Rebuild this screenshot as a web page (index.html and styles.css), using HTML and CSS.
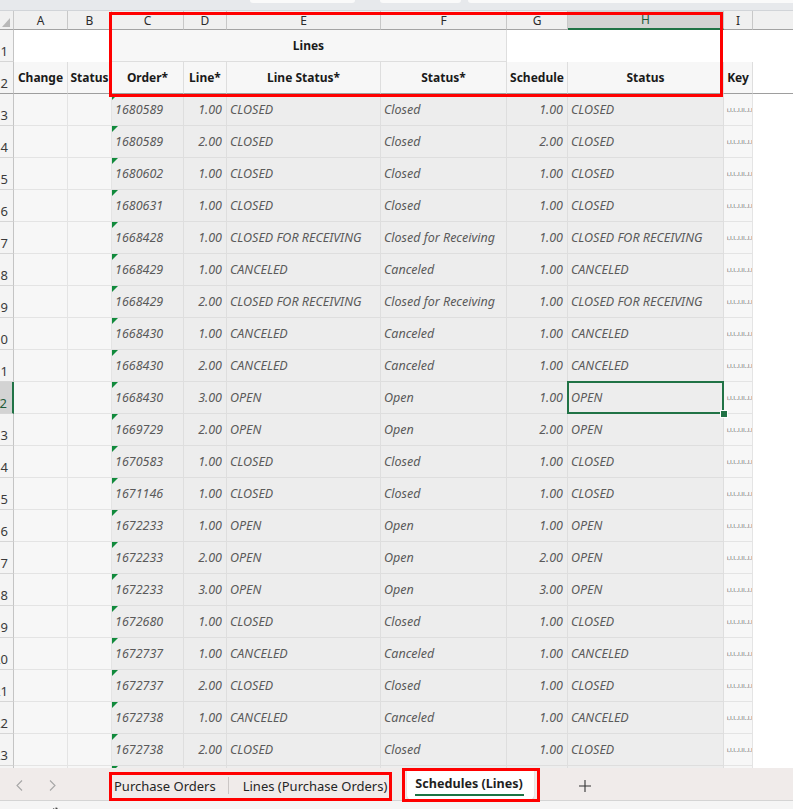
FILE: index.html
```html
<!DOCTYPE html>
<html lang="en">
<head>
    <meta charset="UTF-8">
    <meta name="viewport" content="width=device-width, initial-scale=1.0">
    <title>Schedules (Lines)</title>
    <link rel="stylesheet" href="styles.css">
</head>
<body>
    <div class="ribbon-edge">
        <span class="ribbon-tab tab-a"></span>
        <span class="ribbon-tab tab-b"></span>
        <span class="ribbon-tab tab-c"></span>
    </div>

    <div class="sheet" id="sheet">
        <!-- column letters -->
        <div class="colhead corner"><span class="corner-tri"></span></div>
        <div class="colhead">A</div>
        <div class="colhead">B</div>
        <div class="colhead">C</div>
        <div class="colhead">D</div>
        <div class="colhead">E</div>
        <div class="colhead">F</div>
        <div class="colhead">G</div>
        <div class="colhead sel">H</div>
        <div class="colhead">I</div>
        <div class="colhead last"></div>

        <!-- row 1 -->
        <div class="rh">1</div>
        <div class="c blank"></div>
        <div class="c blank"></div>
        <div class="c group">Lines</div>
        <div class="c blank"></div>
        <div class="c blank"></div>
        <div class="c blank"></div>
        <div class="c blank"></div>

        <!-- row 2 -->
        <div class="rh hd-row">2</div>
        <div class="c hd">Change</div>
        <div class="c hd">Status</div>
        <div class="c hd">Order*</div>
        <div class="c hd">Line*</div>
        <div class="c hd">Line Status*</div>
        <div class="c hd">Status*</div>
        <div class="c hd">Schedule</div>
        <div class="c hd">Status</div>
        <div class="c hd">Key</div>
        <div class="c blank hd-row"></div>
    </div>

    <div class="tabbar">
        <div class="tabnav">
            <svg width="7" height="11" viewBox="0 0 7 11"><path d="M6 0.5 L1 5.5 L6 10.5" fill="none" stroke="#a6a6a6" stroke-width="1.1"/></svg>
            <svg width="7" height="11" viewBox="0 0 7 11"><path d="M1 0.5 L6 5.5 L1 10.5" fill="none" stroke="#a6a6a6" stroke-width="1.1"/></svg>
        </div>
        <div class="tab first">Purchase Orders</div>
        <div class="tab-sep"></div>
        <div class="tab second">Lines (Purchase Orders)</div>
        <div class="tab active"><span>Schedules (Lines)</span></div>
        <div class="tab-add">
            <svg width="12" height="12" viewBox="0 0 12 12"><path d="M6 0 V12 M0 6 H12" stroke="#333" stroke-width="1.1"/></svg>
        </div>
    </div>

    <div class="statusbar">
        <svg class="gear" width="12" height="12" viewBox="0 0 12 12"><circle cx="6" cy="6" r="3.6" fill="none" stroke="#444" stroke-width="1.6" stroke-dasharray="2 1.2"/><circle cx="6" cy="6" r="1.6" fill="none" stroke="#444"/></svg>
    </div>

    <!-- review marks -->
    <div class="mark mark-head"></div>
    <div class="mark mark-tabs"></div>
    <div class="mark mark-active"></div>

    <script>
        const rows = [
            ['1680589', '1.00', 'CLOSED', 'Closed', '1.00', 'CLOSED'],
            ['1680589', '2.00', 'CLOSED', 'Closed', '2.00', 'CLOSED'],
            ['1680602', '1.00', 'CLOSED', 'Closed', '1.00', 'CLOSED'],
            ['1680631', '1.00', 'CLOSED', 'Closed', '1.00', 'CLOSED'],
            ['1668428', '1.00', 'CLOSED FOR RECEIVING', 'Closed for Receiving', '1.00', 'CLOSED FOR RECEIVING'],
            ['1668429', '1.00', 'CANCELED', 'Canceled', '1.00', 'CANCELED'],
            ['1668429', '2.00', 'CLOSED FOR RECEIVING', 'Closed for Receiving', '1.00', 'CLOSED FOR RECEIVING'],
            ['1668430', '1.00', 'CANCELED', 'Canceled', '1.00', 'CANCELED'],
            ['1668430', '2.00', 'CANCELED', 'Canceled', '1.00', 'CANCELED'],
            ['1668430', '3.00', 'OPEN', 'Open', '1.00', 'OPEN'],
            ['1669729', '2.00', 'OPEN', 'Open', '2.00', 'OPEN'],
            ['1670583', '1.00', 'CLOSED', 'Closed', '1.00', 'CLOSED'],
            ['1671146', '1.00', 'CLOSED', 'Closed', '1.00', 'CLOSED'],
            ['1672233', '1.00', 'OPEN', 'Open', '1.00', 'OPEN'],
            ['1672233', '2.00', 'OPEN', 'Open', '2.00', 'OPEN'],
            ['1672233', '3.00', 'OPEN', 'Open', '3.00', 'OPEN'],
            ['1672680', '1.00', 'CLOSED', 'Closed', '1.00', 'CLOSED'],
            ['1672737', '1.00', 'CANCELED', 'Canceled', '1.00', 'CANCELED'],
            ['1672737', '2.00', 'CLOSED', 'Closed', '1.00', 'CLOSED'],
            ['1672738', '1.00', 'CANCELED', 'Canceled', '1.00', 'CANCELED'],
            ['1672738', '2.00', 'CLOSED', 'Closed', '1.00', 'CLOSED'],
            ['1672739', '1.00', 'CLOSED', 'Closed', '1.00', 'CLOSED']
        ];

        const sheet = document.getElementById('sheet');
        const selectedRow = 12;

        function cell(cls, text) {
            const div = document.createElement('div');
            div.className = 'c ' + cls;
            if (text) div.textContent = text;
            sheet.appendChild(div);
            return div;
        }

        rows.forEach((r, i) => {
            const n = i + 3;
            const rh = document.createElement('div');
            rh.className = 'rh' + (n === selectedRow ? ' sel' : '');
            rh.textContent = n;
            sheet.appendChild(rh);

            cell('light');
            cell('light');
            cell('d order', r[0]);
            cell('d num', r[1]);
            cell('d', r[2]);
            cell('d', r[3]);
            cell('d num', r[4]);
            const h = cell('d' + (n === selectedRow ? ' sel' : ''), r[5]);
            if (n === selectedRow) {
                const handle = document.createElement('span');
                handle.className = 'handle';
                h.appendChild(handle);
            }
            const key = cell('light key');
            key.innerHTML = '<span>i,l.l..l.ll..l.l.l</span>';
            cell('blank');
        });
    </script>
</body>
</html>
```

FILE: styles.css
```css
* {
    margin: 0;
    padding: 0;
    box-sizing: border-box;
}

body {
    width: 793px;
    height: 809px;
    overflow: hidden;
    position: relative;
    background: #fff;
    font-family: 'Noto Sans', 'Open Sans', sans-serif;
    color: #1a1a1a;
}

/* strip left over from the ribbon */
.ribbon-edge {
    height: 11px;
    background: #e7e9ec;
    border-bottom: 1px solid #d1d4d8;
    display: flex;
    align-items: flex-start;
    padding-left: 250px;
}

.ribbon-tab {
    height: 3px;
    background: #fafafa;
    border-radius: 0 0 4px 4px;
}

.tab-a { width: 105px; }
.tab-b { width: 81px; margin-left: 25px; }
.tab-c { flex: 1; margin-left: 7px; border-radius: 0 0 0 4px; }

/* grid */
.sheet {
    display: grid;
    grid-template-columns: 14px 54px 44px 72px 43px 154px 126px 61px 156px 29px 1fr;
    grid-template-rows: 19px 32px 32px;
    grid-auto-rows: 32px;
    height: 757px;
    overflow: hidden;
    font-size: 12px;
}

.colhead {
    background: #f0f0f0;
    border-right: 1px solid #c8c8c8;
    border-bottom: 1px solid #a3a3a3;
    display: flex;
    align-items: center;
    justify-content: center;
    font-size: 12px;
    color: #2b2b2b;
}

.colhead.last {
    border-right: none;
}

.colhead.sel {
    background: #d3d3d3;
    border-bottom: 2px solid #217346;
    color: #1f5c39;
}

.corner {
    position: relative;
}

.corner-tri {
    position: absolute;
    right: 3px;
    bottom: 2px;
    width: 0;
    height: 0;
    border-bottom: 9px solid #b8b8b8;
    border-left: 8px solid transparent;
}

.rh {
    background: #f4f4f4;
    border-right: 1px solid #c4c4c4;
    border-bottom: 1px solid #d6d6d6;
    display: flex;
    justify-content: flex-end;
    align-items: flex-end;
    padding: 0 5px 3px 0;
    font-size: 13px;
    line-height: 13px;
    color: #3a3a3a;
    overflow: hidden;
    white-space: nowrap;
}

.rh.sel {
    background: #d3d3d3;
    border-right: 2px solid #217346;
    color: #1f5c39;
}

.rh.hd-row {
    border-bottom: 1px solid #9e9e9e;
}

.c {
    border-right: 1px solid #dedede;
    border-bottom: 1px solid #dedede;
    display: flex;
    align-items: center;
    padding: 0 4px 0 3px;
    white-space: nowrap;
    overflow: hidden;
}

.c.blank {
    background: #fff;
    border: none;
}

.c.blank.hd-row {
    border-bottom: 1px solid #9e9e9e;
}

.c.group {
    grid-column: span 4;
    background: #f7f7f7;
    justify-content: center;
    font-weight: 700;
}

.c.hd {
    background: #f7f7f7;
    justify-content: center;
    font-weight: 700;
    border-bottom: 1px solid #9e9e9e;
    overflow: visible;
    padding: 0;
}

.c.light {
    background: #f7f7f7;
    border-color: #e4e4e4;
}

.c.d {
    background: #ededed;
    color: #5a5a5a;
    font-style: italic;
    font-size: 12.5px;
}

.c.num {
    justify-content: flex-end;
}

.c.order {
    position: relative;
}

.c.order::before {
    content: '';
    position: absolute;
    left: 0;
    top: 0;
    width: 0;
    height: 0;
    border-top: 6px solid #118a3c;
    border-right: 6px solid transparent;
}

.c.key span {
    font-size: 5px;
    font-style: normal;
    color: #3f3f3f;
    letter-spacing: 0.3px;
    padding-top: 1px;
}

.c.d.sel {
    position: relative;
    overflow: visible;
    z-index: 2;
}

.c.d.sel::after {
    content: '';
    position: absolute;
    top: -1px;
    left: -1px;
    right: -1px;
    bottom: -1px;
    border: 2px solid #217346;
}

.handle {
    position: absolute;
    right: -5px;
    bottom: -5px;
    width: 8px;
    height: 8px;
    background: #217346;
    border: 1px solid #fff;
    z-index: 3;
}

/* sheet tabs */
.tabbar {
    height: 32px;
    background: #f0ebea;
    display: flex;
    align-items: stretch;
    font-size: 13px;
    color: #262626;
}

.tabnav {
    width: 110px;
    display: flex;
    align-items: center;
    gap: 26px;
    padding: 2px 0 0 16px;
}

.tab {
    display: flex;
    align-items: center;
    padding-top: 4px;
    white-space: nowrap;
}

.tab.first {
    padding-left: 4px;
    padding-right: 12px;
}

.tab-sep {
    width: 1px;
    background: #cbc6c5;
    margin: 9px 0 6px;
}

.tab.second {
    padding-left: 14px;
    padding-right: 20px;
}

.tab.active {
    background: #fff;
    margin-top: 1px;
    padding: 0 10px 0 8px;
    border-radius: 0 0 5px 5px;
    box-shadow: 0 1px 2px rgba(0, 0, 0, 0.12);
    font-weight: 700;
    font-size: 12.6px;
    color: #1f1f1f;
}

.tab.active span {
    border-bottom: 2px solid #1d7444;
    padding: 2px 1px 2px 0;
}

.tab-add {
    display: flex;
    align-items: center;
    margin-left: 45px;
    padding-top: 3px;
}

.statusbar {
    height: 9px;
    background: #f5f5f5;
    border-top: 1px solid #d4d4d4;
    padding-left: 50px;
    overflow: hidden;
}

.gear {
    display: block;
    margin-top: 5px;
}

/* red review marks */
.mark {
    position: absolute;
    border: 3px solid #ff0000;
    pointer-events: none;
}

.mark-head {
    left: 109px;
    top: 12px;
    width: 614px;
    height: 85px;
}

.mark-tabs {
    left: 109px;
    top: 772px;
    width: 283px;
    height: 29px;
}

.mark-active {
    left: 402px;
    top: 768px;
    width: 138px;
    height: 34px;
}
```
